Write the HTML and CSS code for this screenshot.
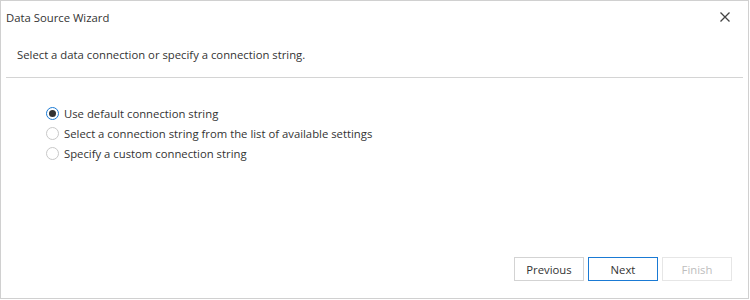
FILE: index.html
```html
<!DOCTYPE html>
<html>
<head>
<meta charset="utf-8">
<link rel="stylesheet" href="styles.css">
</head>
<body>
<div class="window">
  <div class="titlebar">
    <span class="title">Data Source Wizard</span>
    <svg class="close" width="10" height="10" viewBox="0 0 10 10"><path d="M0.5 0.5 L9.5 9.5 M9.5 0.5 L0.5 9.5" stroke="#444" stroke-width="1.3" fill="none"/></svg>
  </div>
  <div class="header">Select a data connection or specify a connection string.</div>
  <div class="content">
    <label class="option"><span class="radio checked"></span>Use default connection string</label>
    <label class="option"><span class="radio"></span>Select a connection string from the list of available settings</label>
    <label class="option"><span class="radio"></span>Specify a custom connection string</label>
  </div>
  <div class="footer">
    <button class="btn">Previous</button>
    <button class="btn primary">Next</button>
    <button class="btn disabled">Finish</button>
  </div>
</div>
</body>
</html>
```
FILE: styles.css
```css
html, body {
  margin: 0;
  padding: 0;
  background: #fff;
}
body {
  font-family: "Open Sans", "Noto Sans", sans-serif;
  font-size: 11.3px;
  color: #333;
}
.window {
  box-sizing: border-box;
  width: 749px;
  height: 299px;
  border: 1px solid #d0d0d0;
  display: flex;
  flex-direction: column;
}
.titlebar {
  height: 32px;
  display: flex;
  align-items: center;
  justify-content: space-between;
  padding: 0 18px 0 5px;
  box-sizing: border-box;
  flex: none;
}
.title {
  font-size: 11.3px;
  color: #333;
}
.close {
  display: block;
}
.header {
  margin: 0 5px;
  padding: 0 0 0 11px;
  height: 45px;
  line-height: 44px;
  border-bottom: 1px solid #d4d4d4;
  box-sizing: border-box;
  flex: none;
}
.content {
  padding: 25px 0 0 45px;
  display: flex;
  flex-direction: column;
  flex: 1;
}
.option {
  display: flex;
  align-items: center;
  height: 20px;
}
.radio {
  box-sizing: border-box;
  width: 13px;
  height: 13px;
  border-radius: 50%;
  border: 1px solid #c8c8c8;
  margin-right: 5px;
  display: flex;
  align-items: center;
  justify-content: center;
}
.radio.checked {
  border: 1.5px solid #1a7ad4;
}
.radio.checked::after {
  content: "";
  width: 7px;
  height: 7px;
  border-radius: 50%;
  background: #333;
}
.footer {
  display: flex;
  justify-content: flex-end;
  gap: 4px;
  padding: 0 16px 17px 0;
}
.btn {
  box-sizing: border-box;
  width: 70px;
  height: 24px;
  font-family: inherit;
  font-size: 11.3px;
  color: #333;
  background: #fff;
  border: 1px solid #d3d3d3;
  padding: 0;
}
.btn.primary {
  border: 1px solid #1a7ad4;
}
.btn.disabled {
  color: #bdbdbd;
  border-color: #e6e6e6;
}
```
